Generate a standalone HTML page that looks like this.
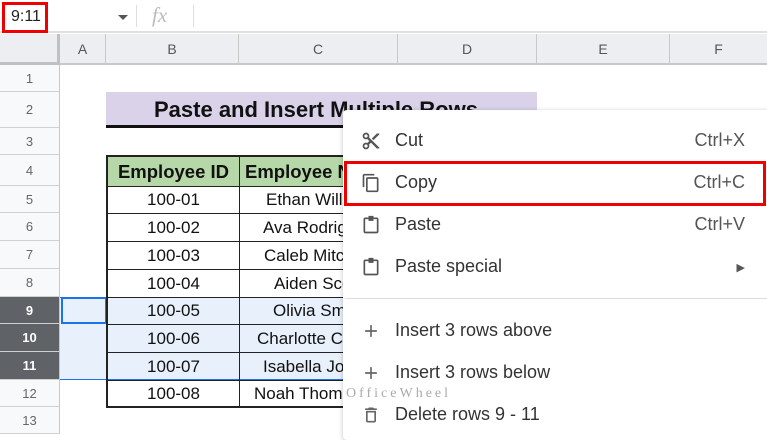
<!DOCTYPE html>
<html><head><style>
*{margin:0;padding:0;box-sizing:border-box}
body{width:767px;height:434px;overflow:hidden;background:#fff;font-family:"Liberation Sans",Arial,sans-serif;position:relative}
.a{position:absolute}
.ch{position:absolute;top:34px;height:31px;line-height:31px;text-align:center;font-size:14px;color:#555;border-right:1px solid #c8c8c8}
.rh{position:absolute;left:0;width:60px;text-align:center;font-size:13px;color:#666;border-bottom:1px solid #d0d0d0;border-right:1px solid #c8c8c8;background:#f8f9fa}
.rh.s{background:#5f6368;color:#fff;font-weight:bold}
.td{position:absolute;border:1px solid #222;text-align:center;font-size:17px;color:#111;overflow:hidden;white-space:nowrap}
.mi{position:absolute;left:343px;width:424px;height:42px;font-size:18px;color:#333}
.mi .t{position:absolute;left:52px;top:11px}
.mi .k{position:absolute;right:22px;top:11px;color:#555}
.mi svg{position:absolute;left:18px;top:12px}
</style></head><body>
<div class="a" style="left:0;top:0;width:767px;height:33px;border-bottom:2px solid #e0e0e0"></div>
<div class="a" style="left:2px;top:2px;width:46px;height:31px;border:3px solid #e00;font-size:16px;line-height:24px;padding-left:6px;color:#222">9:11</div>
<div class="a" style="left:118px;top:15px;width:0;height:0;border-left:5px solid transparent;border-right:5px solid transparent;border-top:5px solid #555"></div>
<div class="a" style="left:136px;top:5px;width:1px;height:22px;background:#ddd"></div>
<div class="a" style="left:152px;top:3px;font-family:'Liberation Serif',serif;font-style:italic;font-size:21px;color:#bbb">fx</div>
<div class="a" style="left:193px;top:5px;width:1px;height:22px;background:#ddd"></div>
<div class="a" style="left:0;top:34px;width:767px;height:31px;background:#eceef1;border-bottom:2px solid #c8c8c8"></div>
<div class="a" style="left:0;top:34px;width:60px;height:31px;border-right:3px solid #c0c0c0;border-bottom:3px solid #c0c0c0"></div>
<div class="ch" style="left:60px;width:46px">A</div>
<div class="ch" style="left:106px;width:133px">B</div>
<div class="ch" style="left:239px;width:159px">C</div>
<div class="ch" style="left:398px;width:139px">D</div>
<div class="ch" style="left:537px;width:133px">E</div>
<div class="ch" style="left:670px;width:97px;border:none">F</div>
<div class="rh" style="top:65px;height:27px;line-height:27px">1</div>
<div class="rh" style="top:92px;height:36px;line-height:36px">2</div>
<div class="rh" style="top:128px;height:27px;line-height:27px">3</div>
<div class="rh" style="top:155px;height:31px;line-height:31px">4</div>
<div class="rh" style="top:186px;height:27px;line-height:27px">5</div>
<div class="rh" style="top:213px;height:28px;line-height:28px">6</div>
<div class="rh" style="top:241px;height:28px;line-height:28px">7</div>
<div class="rh" style="top:269px;height:28px;line-height:28px">8</div>
<div class="rh s" style="top:297px;height:27px;line-height:27px">9</div>
<div class="rh s" style="top:324px;height:28px;line-height:28px">10</div>
<div class="rh s" style="top:352px;height:28px;line-height:28px">11</div>
<div class="rh" style="top:380px;height:27px;line-height:27px">12</div>
<div class="rh" style="top:407px;height:27px;line-height:27px">13</div>
<div class="a" style="left:60px;top:297px;width:300px;height:83px;background:#e8f0fc;border-top:1px solid #1a73e8;border-bottom:1px solid #1a73e8"></div>
<div class="a" style="left:61px;top:297px;width:46px;height:27px;border:2px solid #1a73e8"></div>
<div class="a" style="left:106px;top:92px;width:431px;height:36px;background:#d9d2e9;border-bottom:3px solid #111;overflow:hidden;white-space:nowrap"><div style="position:absolute;left:48px;top:5px;font-weight:bold;font-size:22px;color:#111">Paste and Insert Multiple Rows</div></div>
<div class="td" style="left:106px;top:155px;width:134px;height:32px;line-height:30px;background:#b6d7a8;font-weight:bold;font-size:18.5px;border-width:2px 1px 1px 2px">Employee ID</div>
<div class="td" style="left:239px;top:155px;width:140px;height:32px;line-height:30px;background:#b6d7a8;font-weight:bold;font-size:18.5px;border-width:2px 1px 1px 1px;text-align:left;padding-left:5px">Employee Name</div>
<div class="td" style="left:106px;top:186px;width:134px;height:28px;line-height:26px;border-left-width:2px">100-01</div>
<div class="td" style="left:239px;top:186px;width:140px;height:28px;line-height:26px;text-align:left;padding-left:26px">Ethan Williams</div>
<div class="td" style="left:106px;top:213px;width:134px;height:29px;line-height:27px;border-left-width:2px">100-02</div>
<div class="td" style="left:239px;top:213px;width:140px;height:29px;line-height:27px;text-align:left;padding-left:23px">Ava Rodriguez</div>
<div class="td" style="left:106px;top:241px;width:134px;height:29px;line-height:27px;border-left-width:2px">100-03</div>
<div class="td" style="left:239px;top:241px;width:140px;height:29px;line-height:27px;text-align:left;padding-left:24px">Caleb Mitchell</div>
<div class="td" style="left:106px;top:269px;width:134px;height:29px;line-height:27px;border-left-width:2px">100-04</div>
<div class="td" style="left:239px;top:269px;width:140px;height:29px;line-height:27px;text-align:left;padding-left:34px">Aiden Scott</div>
<div class="td" style="left:106px;top:297px;width:134px;height:28px;line-height:26px;border-left-width:2px">100-05</div>
<div class="td" style="left:239px;top:297px;width:140px;height:28px;line-height:26px;text-align:left;padding-left:33px">Olivia Smith</div>
<div class="td" style="left:106px;top:324px;width:134px;height:29px;line-height:27px;border-left-width:2px">100-06</div>
<div class="td" style="left:239px;top:324px;width:140px;height:29px;line-height:27px;text-align:left;padding-left:17px">Charlotte Clark</div>
<div class="td" style="left:106px;top:352px;width:134px;height:29px;line-height:27px;border-left-width:2px">100-07</div>
<div class="td" style="left:239px;top:352px;width:140px;height:29px;line-height:27px;text-align:left;padding-left:23px">Isabella Jones</div>
<div class="td" style="left:106px;top:380px;width:134px;height:28px;line-height:26px;border-width:1px 1px 2px 2px">100-08</div>
<div class="td" style="left:239px;top:380px;width:140px;height:28px;line-height:26px;text-align:left;padding-left:14px;border-bottom-width:2px">Noah Thompson</div>
<div class="a" style="left:343px;top:110px;width:430px;height:330px;background:#fff;box-shadow:0 1px 5px rgba(0,0,0,.25);border-radius:4px"></div>
<div class="mi" style="top:119px"><svg width="20" height="20" viewBox="0 0 24 24"><path fill="#555" d="M9.64 7.64c.23-.5.36-1.05.36-1.64 0-2.210-1.79-4-4-4S2 3.79 2 6s1.79 4 4 4c.59 0 1.14-.13 1.64-.36L10 12l-2.360 2.360C7.14 14.13 6.59 14 6 14c-2.21 0-4 1.79-4 4s1.79 4 4 4 4-1.79 4-4c0-.59-.13-1.14-.36-1.64L12 14l7 7h3v-1L9.64 7.64zM6 8c-1.1 0-2-.89-2-2s.9-2 2-2 2 .89 2 2-.9 2-2 2zm0 12c-1.1 0-2-.89-2-2s.9-2 2-2 2 .89 2 2-.9 2-2 2zM19 3l-6 6 2 2 7-7V3z"/></svg><span class="t">Cut</span><span class="k">Ctrl+X</span></div>
<div class="mi" style="top:161px"><svg width="20" height="20" viewBox="0 0 24 24"><path fill="#555" d="M16 1H4c-1.1 0-2 .9-2 2v14h2V3h12V1zm3 4H8c-1.1 0-2 .9-2 2v14c0 1.1.9 2 2 2h11c1.1 0 2-.9 2-2V7c0-1.1-.9-2-2-2zm0 16H8V7h11v14z"/></svg><span class="t">Copy</span><span class="k">Ctrl+C</span></div>
<div class="mi" style="top:203px"><svg width="20" height="20" viewBox="0 0 24 24"><path fill="#555" d="M19 3h-4V1H9v2H5c-1.1 0-2 .9-2 2v15c0 1.1.9 2 2 2h14c1.1 0 2-.9 2-2V5c0-1.1-.9-2-2-2zm0 17H5V5h4v2h6V5h4v15z"/></svg><span class="t">Paste</span><span class="k">Ctrl+V</span></div>
<div class="mi" style="top:245px"><svg width="20" height="20" viewBox="0 0 24 24"><path fill="#555" d="M19 3h-4V1H9v2H5c-1.1 0-2 .9-2 2v15c0 1.1.9 2 2 2h14c1.1 0 2-.9 2-2V5c0-1.1-.9-2-2-2zm0 17H5V5h4v2h6V5h4v15z"/></svg><span class="t">Paste special</span><span class="k" style="font-size:11px;top:16px">&#9654;</span></div>
<div class="a" style="left:345px;top:298px;width:422px;height:1px;background:#ddd"></div>
<div class="mi" style="top:309px"><svg width="20" height="20" viewBox="0 0 24 24"><path fill="#666" d="M11 5h2v14h-2zM5 11h14v2H5z"/></svg><span class="t">Insert 3 rows above</span></div>
<div class="mi" style="top:351px"><svg width="20" height="20" viewBox="0 0 24 24"><path fill="#666" d="M11 5h2v14h-2zM5 11h14v2H5z"/></svg><span class="t">Insert 3 rows below</span></div>
<div class="mi" style="top:393px"><svg width="20" height="20" viewBox="0 0 24 24"><path fill="#666" d="M6 19c0 1.1.9 2 2 2h8c1.1 0 2-.9 2-2V7H6v12zm2-10h8v10H8V9zm7.5-5l-1-1h-5l-1 1H5v2h14V4z"/></svg><span class="t">Delete rows 9 - 11</span></div>
<div class="a" style="left:346px;top:386px;font-family:'Liberation Serif',serif;font-size:14px;letter-spacing:3px;color:#aaa">OfficeWheel</div>
<div class="a" style="left:344px;top:161px;width:422px;height:45px;border:3px solid #e00"></div>
</body></html>
